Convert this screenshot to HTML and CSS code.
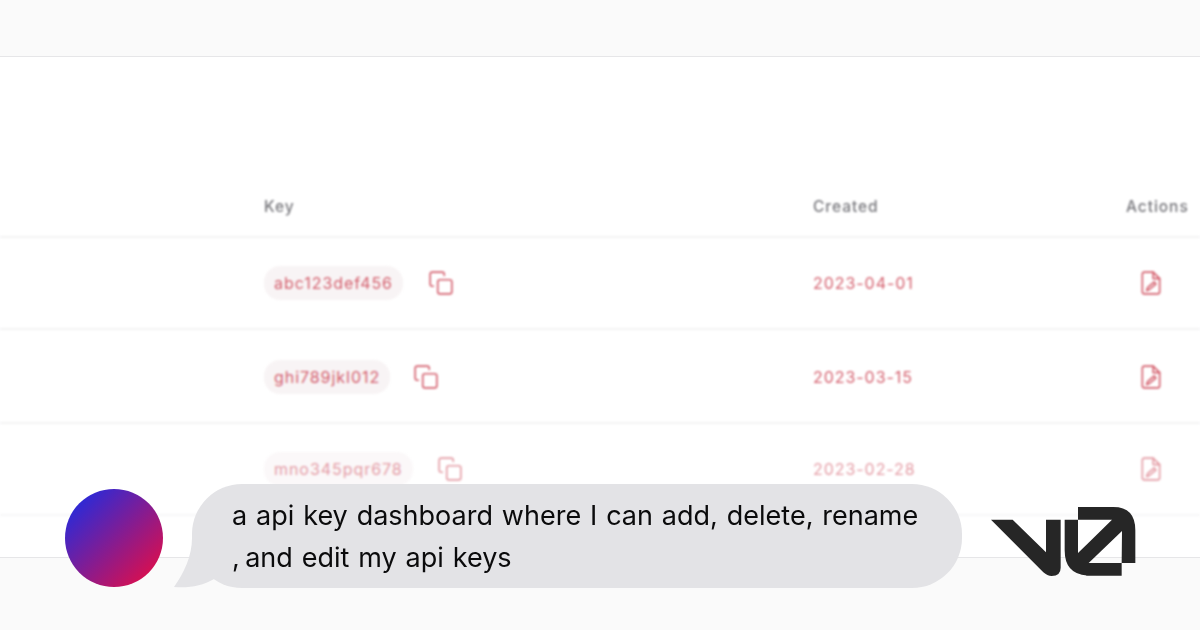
FILE: index.html
```html
<!DOCTYPE html>
<html lang="en">
<head>
<meta charset="utf-8">
<title>API keys</title>
<link rel="stylesheet" href="styles.css">
</head>
<body>
<svg class="defs" width="0" height="0" aria-hidden="true">
  <defs>
    <symbol id="copy" viewBox="0 0 24 24"><rect x="9" y="9" width="13" height="13" rx="2"/><path d="M5 15H4a2 2 0 0 1-2-2V4a2 2 0 0 1 2-2h9a2 2 0 0 1 2 2v1"/></symbol>
    <symbol id="edit" viewBox="0 0 24 24"><path d="M14 2H6a2 2 0 0 0-2 2v16a2 2 0 0 0 2 2h12a2 2 0 0 0 2-2V8z"/><path d="M14 2v6h6"/><path d="M8 19l1-3 6-5 1.5 2-6 5z"/></symbol>
  </defs>
</svg>
<div class="page">
  <header class="topbar"></header>
  <main class="content">
    <div class="table">
      <div class="row head">
        <div class="cell-key">Key</div>
        <div class="cell-created">Created</div>
        <div class="cell-actions">Actions</div>
      </div>
      <div class="row r1">
        <div class="cell-key"><span class="pill">abc123def456</span><svg class="ico"><use href="#copy"/></svg></div>
        <div class="cell-date">2023-04-01</div>
        <div class="cell-act"><svg class="ico"><use href="#edit"/></svg></div>
      </div>
      <div class="row r2">
        <div class="cell-key"><span class="pill">ghi789jkl012</span><svg class="ico"><use href="#copy"/></svg></div>
        <div class="cell-date">2023-03-15</div>
        <div class="cell-act"><svg class="ico"><use href="#edit"/></svg></div>
      </div>
      <div class="row r3">
        <div class="cell-key"><span class="pill">mno345pqr678</span><svg class="ico"><use href="#copy"/></svg></div>
        <div class="cell-date">2023-02-28</div>
        <div class="cell-act"><svg class="ico"><use href="#edit"/></svg></div>
      </div>
    </div>
  </main>
  <footer class="bottombar"></footer>
</div>
<div class="prompt">
  <div class="avatar"></div>
  <div class="bubble-wrap">
    <svg class="tail" width="60" height="50" viewBox="0 0 60 50"><path d="M20 0C20 18 12 35 2 49C18 50 30 48 42 41L60 20Z"/></svg>
    <p class="bubble">a api key dashboard where I can add, delete, rename<br><span class="comma">, </span>and edit my api keys</p>
  </div>
</div>
<svg class="logo" width="145" height="69" viewBox="123 80 435 207"><path d="M123 118H188L288 216V118H332V262Q332 287 305 287Q292 287 280 276Z"/><path fill-rule="evenodd" d="M344 118H384V80H490Q556 80 556 150V248H515V286H420Q344 286 344 210ZM384 118V218L486 118ZM516 152L416 248H515Z"/></svg>
</body>
</html>
```
FILE: styles.css
```css
* { box-sizing: border-box; }
html, body { margin: 0; height: 630px; overflow: hidden; background: #fff; font-family: Inter, "Liberation Sans", sans-serif; }
.defs { position: absolute; }
.page { display: flex; flex-direction: column; height: 630px; }
.topbar { height: 57px; background: #fafafa; border-bottom: 1px solid #e6e6e8; }
.content { height: 500px; background: #fff; }
.bottombar { flex: 1; background: #fafafa; border-top: 1px solid #e6e6e8; }
.table { filter: blur(0.8px); }
.row { display: grid; grid-template-columns: 549px 313px 1fr; padding-left: 264px; align-items: center; border-bottom: 2px solid #f3f3f4; font-size: 16px; letter-spacing: 0.95px; }
.head { height: 181px; padding-top: 120px; color: #77777c; font-size: 15.5px; letter-spacing: 0.95px; font-weight: 500; }
.r1 { height: 92px; }
.r2 { height: 94px; padding-top: 1px; }
.r3 { height: 92px; opacity: 0.62; }
.cell-key { display: flex; align-items: center; gap: 25px; }
.r2 .cell-key { gap: 23px; }
.r3 .cell-key { gap: 24px; }
.cell-date { color: #d4606e; }
.pill { padding: 8px 10px; border-radius: 16px; background: #f8f4f5; color: #d4606e; line-height: 18px; }
.ico { width: 26px; height: 26px; fill: none; stroke: #d4606e; stroke-width: 1.5; stroke-linecap: round; stroke-linejoin: round; }
.cell-act { padding-left: 12px; display: flex; }
.prompt { position: absolute; left: 65px; top: 484px; display: flex; gap: 29px; align-items: flex-start; }
.avatar { width: 98px; height: 98px; margin-top: 5px; border-radius: 50%; background: linear-gradient(135deg, #2a2ad8 12%, #d80f50 88%); }
.bubble-wrap { position: relative; }
.tail { position: absolute; left: -20px; top: 54px; fill: #e3e3e6; }
.bubble { position: relative; margin: 0; width: 770px; height: 104px; padding: 11px 40px; border-radius: 50px; background: #e3e3e6; color: #0b0b0c; font-size: 27px; line-height: 42px; word-spacing: 1.3px; white-space: nowrap; }
.comma { word-spacing: -2.2px; }
.logo { position: absolute; left: 991px; top: 507px; fill: #262626; }
```
